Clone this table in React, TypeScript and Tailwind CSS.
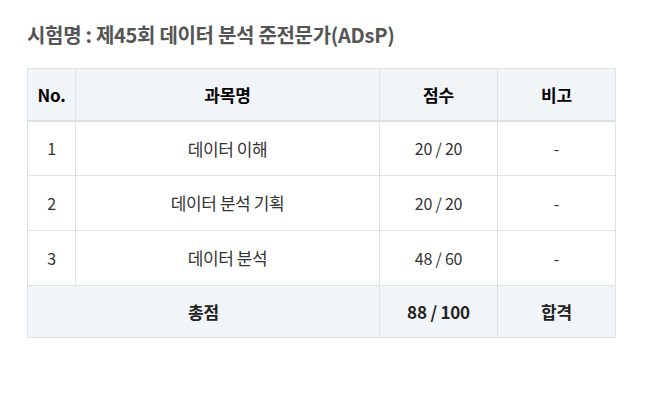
const rows = [
  { no: "1", name: "데이터 이해", score: "20 / 20", note: "-" },
  { no: "2", name: "데이터 분석 기획", score: "20 / 20", note: "-" },
  { no: "3", name: "데이터 분석", score: "48 / 60", note: "-" },
];

const App = () => {
  return (
    <div className="w-[653px] h-[395px] bg-white font-['Noto_Sans_CJK_KR','Noto_Sans',sans-serif]">
      <div className="pl-[27px] pt-[19px]">
        <h2 className="text-[20px] font-semibold text-[#555] tracking-[-0.3px] leading-[32px]">
          시험명 : 제45회 데이터 분석 준전문가(ADsP)
        </h2>
        <table className="mt-[17px] w-[588px] border-collapse table-fixed text-[16px] tracking-[-0.2px]">
          <colgroup>
            <col className="w-[48px]" />
            <col className="w-[304px]" />
            <col className="w-[118px]" />
            <col className="w-[118px]" />
          </colgroup>
          <thead>
            <tr className="h-[52px] bg-[#f2f5f7] border-b-2 border-[#dde1e5] text-[17px]">
              <th className="border border-[#dfe3e7] font-bold text-black">No.</th>
              <th className="border border-[#dfe3e7] font-bold text-black">과목명</th>
              <th className="border border-[#dfe3e7] font-bold text-black">점수</th>
              <th className="border border-[#dfe3e7] font-bold text-black">비고</th>
            </tr>
          </thead>
          <tbody>
            {rows.map((r) => (
              <tr key={r.no} className="h-[55px] text-[#333]">
                <td className="border border-[#dfe3e7] text-center">{r.no}</td>
                <td className="border border-[#dfe3e7] text-center text-[17px] tracking-[-0.4px]">{r.name}</td>
                <td className="border border-[#dfe3e7] text-center">{r.score}</td>
                <td className="border border-[#dfe3e7] text-center">{r.note}</td>
              </tr>
            ))}
            <tr className="h-[52px] bg-[#f2f5f7] font-bold text-[#222] text-[17px]">
              <td colSpan={2} className="border border-[#dfe3e7] text-center">총점</td>
              <td className="border border-[#dfe3e7] text-center">88 / 100</td>
              <td className="border border-[#dfe3e7] text-center">합격</td>
            </tr>
          </tbody>
        </table>
      </div>
    </div>
  );
};

export default App;
